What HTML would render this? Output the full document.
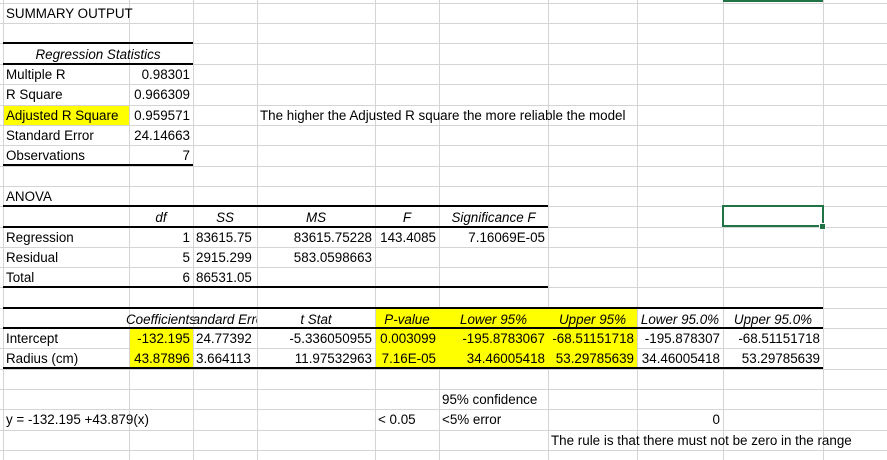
<!DOCTYPE html>
<html><head><meta charset="utf-8"><style>
body{margin:0;width:887px;height:460px;background:#fff;position:relative;overflow:hidden;font-family:"Liberation Sans",sans-serif;font-size:13.4px;color:#000}
.v{position:absolute;top:0;height:460px;width:1px;background:#d4d4d4}
.h{position:absolute;left:0;width:887px;height:1px;background:#d4d4d4}
.k{position:absolute;height:2px;background:#000}
.c{position:absolute;height:20px;line-height:22px;padding:0 3px;box-sizing:border-box;white-space:nowrap}
.r{text-align:right}.m{text-align:center}.i{font-style:italic}
.y{background:#ffff00}
.w{background:#fff;overflow:hidden}
</style></head><body>
<div class="v" style="left:3px"></div><div class="v" style="left:129px"></div><div class="v" style="left:193px"></div><div class="v" style="left:257px"></div><div class="v" style="left:375px"></div><div class="v" style="left:439px"></div><div class="v" style="left:548px"></div><div class="v" style="left:637px"></div><div class="v" style="left:723px"></div><div class="v" style="left:823px"></div>
<div class="h" style="top:3px"></div><div class="h" style="top:23px"></div><div class="h" style="top:43px"></div><div class="h" style="top:64px"></div><div class="h" style="top:84px"></div><div class="h" style="top:105px"></div><div class="h" style="top:125px"></div><div class="h" style="top:145px"></div><div class="h" style="top:166px"></div><div class="h" style="top:186px"></div><div class="h" style="top:206px"></div><div class="h" style="top:227px"></div><div class="h" style="top:247px"></div><div class="h" style="top:267px"></div><div class="h" style="top:287px"></div><div class="h" style="top:308px"></div><div class="h" style="top:328px"></div><div class="h" style="top:348px"></div><div class="h" style="top:369px"></div><div class="h" style="top:389px"></div><div class="h" style="top:409px"></div><div class="h" style="top:430px"></div><div class="h" style="top:450px"></div>

<div class="y" style="position:absolute;left:4px;top:106px;width:125px;height:19px"></div>
<div class="y" style="position:absolute;left:130px;top:329px;width:63px;height:40px"></div>
<div class="y" style="position:absolute;left:376px;top:309px;width:261px;height:60px"></div>

<div class="c" style="left:3px;top:3px">SUMMARY OUTPUT</div>
<div class="c m i" style="left:3px;top:44px;width:190px">Regression Statistics</div>
<div class="c" style="left:3px;top:64px">Multiple R</div><div class="c r" style="left:129px;top:64px;width:64px">0.98301</div>
<div class="c" style="left:3px;top:84px">R Square</div><div class="c r" style="left:129px;top:84px;width:64px">0.966309</div>
<div class="c" style="left:3px;top:105px">Adjusted R Square</div><div class="c r" style="left:129px;top:105px;width:64px">0.959571</div>
<div class="c" style="left:257px;top:105px">The higher the Adjusted R square the more reliable the model</div>
<div class="c" style="left:3px;top:125px">Standard Error</div><div class="c r" style="left:129px;top:125px;width:64px">24.14663</div>
<div class="c" style="left:3px;top:145px">Observations</div><div class="c r" style="left:129px;top:145px;width:64px">7</div>

<div class="c" style="left:3px;top:186px">ANOVA</div>
<div class="c m i" style="left:129px;top:207px;width:64px">df</div>
<div class="c m i" style="left:193px;top:207px;width:64px">SS</div>
<div class="c m i" style="left:257px;top:207px;width:118px">MS</div>
<div class="c m i" style="left:375px;top:207px;width:64px">F</div>
<div class="c m i" style="left:439px;top:207px;width:109px">Significance F</div>
<div class="c" style="left:3px;top:227px">Regression</div><div class="c r" style="left:129px;top:227px;width:64px">1</div><div class="c" style="left:193px;top:227px">83615.75</div><div class="c r" style="left:257px;top:227px;width:118px">83615.75228</div><div class="c r" style="left:375px;top:227px;width:64px">143.4085</div><div class="c r" style="left:439px;top:227px;width:109px">7.16069E-05</div>
<div class="c" style="left:3px;top:247px">Residual</div><div class="c r" style="left:129px;top:247px;width:64px">5</div><div class="c" style="left:193px;top:247px">2915.299</div><div class="c r" style="left:257px;top:247px;width:118px">583.0598663</div>
<div class="c" style="left:3px;top:267px">Total</div><div class="c r" style="left:129px;top:267px;width:64px">6</div><div class="c" style="left:193px;top:267px">86531.05</div>

<div class="c m i" style="left:129px;top:309px;width:64px;overflow:visible;display:flex;justify-content:center"><span>Coefficients</span></div>
<div class="c w i" style="left:194px;top:309px;width:63px;height:19px;padding:0"><span style="position:absolute;left:-14px">Standard Error</span></div>
<div class="c m i" style="left:257px;top:309px;width:118px">t Stat</div>
<div class="c m i" style="left:375px;top:309px;width:64px">P-value</div>
<div class="c m i" style="left:439px;top:309px;width:109px">Lower 95%</div>
<div class="c m i" style="left:548px;top:309px;width:89px">Upper 95%</div>
<div class="c m i" style="left:637px;top:309px;width:86px">Lower 95.0%</div>
<div class="c m i" style="left:723px;top:309px;width:100px">Upper 95.0%</div>
<div class="c" style="left:3px;top:328px">Intercept</div><div class="c r" style="left:129px;top:328px;width:64px">-132.195</div><div class="c" style="left:193px;top:328px">24.77392</div><div class="c r" style="left:257px;top:328px;width:118px">-5.336050955</div><div class="c r" style="left:375px;top:328px;width:64px">0.003099</div><div class="c r" style="left:439px;top:328px;width:109px">-195.8783067</div><div class="c r" style="left:548px;top:328px;width:89px">-68.51151718</div><div class="c r" style="left:637px;top:328px;width:86px">-195.878307</div><div class="c r" style="left:723px;top:328px;width:100px">-68.51151718</div>
<div class="c" style="left:3px;top:348px">Radius (cm)</div><div class="c r" style="left:129px;top:348px;width:64px">43.87896</div><div class="c" style="left:193px;top:348px">3.664113</div><div class="c r" style="left:257px;top:348px;width:118px">11.97532963</div><div class="c r" style="left:375px;top:348px;width:64px">7.16E-05</div><div class="c r" style="left:439px;top:348px;width:109px">34.46005418</div><div class="c r" style="left:548px;top:348px;width:89px">53.29785639</div><div class="c r" style="left:637px;top:348px;width:86px">34.46005418</div><div class="c r" style="left:723px;top:348px;width:100px">53.29785639</div>

<div class="c" style="left:439px;top:389px">95% confidence</div>
<div class="c" style="left:3px;top:409px">y = -132.195 +43.879(x)</div>
<div class="c" style="left:375px;top:409px">&lt; 0.05</div>
<div class="c" style="left:439px;top:409px">&lt;5% error</div>
<div class="c r" style="left:637px;top:409px;width:86px">0</div>
<div class="c" style="left:548px;top:430px">The rule is that there must not be zero in the range</div>

<div class="k" style="left:3px;top:42px;width:190px"></div><div class="k" style="left:3px;top:63px;width:190px"></div><div class="k" style="left:3px;top:164px;width:190px"></div>
<div class="k" style="left:3px;top:205px;width:545px"></div><div class="k" style="left:3px;top:226px;width:545px"></div><div class="k" style="left:3px;top:286px;width:545px"></div>
<div class="k" style="left:3px;top:307px;width:820px"></div><div class="k" style="left:3px;top:327px;width:820px"></div><div class="k" style="left:3px;top:367px;width:820px"></div>

<div style="position:absolute;left:722px;top:205px;width:98px;height:18px;border:2px solid #217346"></div>
<div style="position:absolute;left:819px;top:223px;width:5px;height:5px;background:#217346;border:1px solid #fff"></div>
<div style="position:absolute;left:723px;top:0;width:100px;height:2px;background:#217346"></div>
</body></html>
